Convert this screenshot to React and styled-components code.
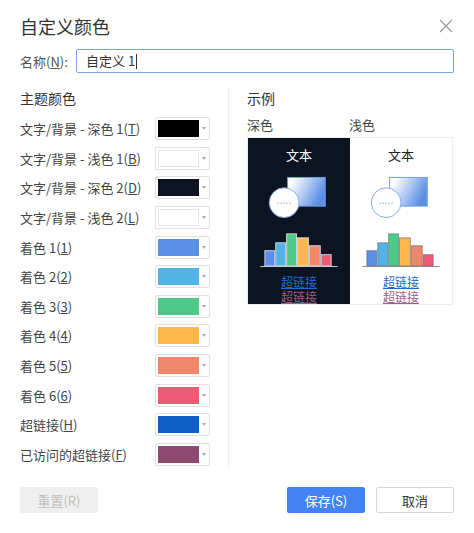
import React from "react";
import styled, { createGlobalStyle } from "styled-components";

const GlobalStyle = createGlobalStyle`
  html, body {
    margin: 0;
    padding: 0;
    background: #ffffff;
  }
  body {
    font-family: "Noto Sans CJK SC", "Noto Sans", "Liberation Sans", sans-serif;
    color: #333;
  }
`;

const Dialog = styled.div`
  width: 474px;
  height: 533px;
  box-sizing: border-box;
  padding: 14px 20px 0 20px;
  display: flex;
  flex-direction: column;
`;

const Header = styled.div`
  display: flex;
  align-items: center;
  justify-content: space-between;
  height: 24px;
`;

const Title = styled.div`
  font-size: 18px;
  line-height: 24px;
  color: #333;
`;

const Close = styled.div`
  width: 14px;
  height: 14px;
  margin-right: 1px;
  display: flex;
`;

const NameRow = styled.div`
  display: flex;
  align-items: center;
  margin-top: 11px;
  height: 24px;
`;

const Label = styled.span`
  font-size: 13px;
  color: #555;
  width: 56px;
  flex-shrink: 0;
`;

const Input = styled.div`
  flex: 1;
  height: 24px;
  box-sizing: border-box;
  border: 1px solid #7ea3e2;
  border-radius: 2px;
  padding-left: 9px;
  font-size: 13px;
  line-height: 22px;
  color: #333;
  display: flex;
  align-items: center;
`;

const Caret = styled.span`
  display: inline-block;
  width: 1px;
  height: 15px;
  background: #333;
  margin-left: 1px;
`;

const Main = styled.div`
  display: flex;
  margin-top: 15px;
  height: 380px;
`;

const LeftCol = styled.div`
  width: 209px;
  border-right: 1px solid #ececec;
  box-sizing: border-box;
  padding-right: 18px;
`;

const RightCol = styled.div`
  flex: 1;
  padding-left: 18px;
`;

const SectionTitle = styled.div`
  font-size: 14px;
  line-height: 20px;
  color: #333;
  margin-bottom: 6px;
`;

const ColorRow = styled.div`
  display: flex;
  align-items: center;
  justify-content: space-between;
  height: 29.6px;
`;

const RowLabel = styled.span`
  font-size: 13px;
  color: #444;
  white-space: nowrap;
`;

const Swatch = styled.div`
  width: 55px;
  height: 23px;
  box-sizing: border-box;
  border: 1px solid #e0e0e0;
  border-radius: 2px;
  display: flex;
  align-items: center;
  padding: 0 0 0 2px;
`;

const SwatchColor = styled.div`
  width: 41px;
  height: 17px;
  box-sizing: border-box;
  background: ${(p) => p.color};
  border: 1px solid ${(p) => (p.color === "#ffffff" ? "#e4e4e4" : p.color)};
`;

const Arrow = styled.div`
  flex: 1;
  display: flex;
  justify-content: center;
  &::after {
    content: "";
    border-left: 2.5px solid transparent;
    border-right: 2.5px solid transparent;
    border-top: 3px solid #aaa;
  }
`;

const ModeLabels = styled.div`
  display: flex;
  font-size: 13px;
  line-height: 18px;
  color: #444;
  margin-top: 8px;
  & > span {
    width: 102px;
  }
`;

const Preview = styled.div`
  display: flex;
  margin-top: 3px;
  width: 206px;
  height: 168px;
  border: 1px solid #ececec;
  box-sizing: border-box;
`;

const Panel = styled.div`
  width: 102px;
  flex-shrink: 0;
  background: ${(p) => (p.dark ? "#0d1421" : "#ffffff")};
  display: flex;
  flex-direction: column;
  align-items: center;
`;

const PanelText = styled.div`
  font-size: 13px;
  line-height: 18px;
  margin-top: 8px;
  color: ${(p) => (p.dark ? "#ffffff" : "#222")};
`;

const LinkStack = styled.div`
  margin-top: 5px;
  display: flex;
  flex-direction: column;
  align-items: center;
`;

const Link = styled.div`
  font-size: 12px;
  line-height: 15px;
  height: 15px;
  text-decoration: underline;
  color: ${(p) => p.color};
`;

const Footer = styled.div`
  display: flex;
  align-items: center;
  margin-top: 19px;
`;

const Button = styled.div`
  width: 78px;
  height: 26px;
  box-sizing: border-box;
  border-radius: 2px;
  font-size: 13px;
  display: flex;
  align-items: center;
  justify-content: center;
  background: ${(p) =>
    p.variant === "primary" ? "#4384f2" : p.variant === "disabled" ? "#efefef" : "#fff"};
  color: ${(p) =>
    p.variant === "primary" ? "#fff" : p.variant === "disabled" ? "#c0c0c0" : "#333"};
  border: 1px solid
    ${(p) => (p.variant === "secondary" ? "#d6d6d6" : "transparent")};
  margin-left: ${(p) => p.ml || 0}px;
`;

const Spacer = styled.div`
  flex: 1;
`;

const rows = [
  ["文字/背景 - 深色 1(", "T", ")", "#000000"],
  ["文字/背景 - 浅色 1(", "B", ")", "#ffffff"],
  ["文字/背景 - 深色 2(", "D", ")", "#0d1421"],
  ["文字/背景 - 浅色 2(", "L", ")", "#ffffff"],
  ["着色 1(", "1", ")", "#5b8fe6"],
  ["着色 2(", "2", ")", "#52b3e6"],
  ["着色 3(", "3", ")", "#4fc98a"],
  ["着色 4(", "4", ")", "#ffb74d"],
  ["着色 5(", "5", ")", "#f0866a"],
  ["着色 6(", "6", ")", "#ee5a74"],
  ["超链接(", "H", ")", "#0e5fc4"],
  ["已访问的超链接(", "F", ")", "#8e4a6e"],
];

const accents = ["#5b8fe6", "#52b3e6", "#4fc98a", "#ffb74d", "#f0866a", "#ee5a74"];
const bars = [
  [16, 11, 81],
  [27, 11, 73],
  [38, 11, 64],
  [49, 12, 68],
  [61, 12, 76],
  [73, 11, 85],
];

const Chart = ({ dark }) => {
  const id = dark ? "gd" : "gl";
  return (
    <svg width="102" height="100" viewBox="0 0 102 100" style={{ marginTop: 6 }}>
      <defs>
        <linearGradient id={id} x1="0" y1="0" x2="1" y2="0.4">
          <stop offset="0.15" stopColor="#ffffff" />
          <stop offset="1" stopColor="#5b8fe6" />
        </linearGradient>
      </defs>
      <rect x="39.5" y="7.5" width="38" height="29" fill={`url(#${id})`} stroke="#6f9be6" strokeWidth="1" />
      <circle cx="36" cy="33" r="15" fill="#ffffff" stroke="#86a9e6" strokeWidth="1" />
      {[30, 33, 36, 39, 42].map((x) => (
        <circle key={x} cx={x} cy="33.5" r="0.9" fill="#b3c8ee" />
      ))}
      {bars.map(([x, w, y], i) => (
        <rect
          key={i}
          x={x + 0.5}
          y={y + 0.5}
          width={w - 1}
          height={97 - y - 0.5}
          fill={accents[i]}
          stroke={dark ? "#e8eef8" : "#5a5a66"}
          strokeOpacity={dark ? 0.8 : 0.55}
          strokeWidth="1"
        />
      ))}
      <line x1="12" y1="97.5" x2="90" y2="97.5" stroke={dark ? "#c8ccd4" : "#888"} strokeWidth="1" />
    </svg>
  );
};

const PreviewPanel = ({ dark }) => (
  <Panel dark={dark}>
    <PanelText dark={dark}>文本</PanelText>
    <Chart dark={dark} />
    <LinkStack>
      <Link color="#1f6bd0">超链接</Link>
      <Link color="#a05c86">超链接</Link>
    </LinkStack>
  </Panel>
);

export default function App() {
  return (
    <>
      <GlobalStyle />
      <Dialog>
        <Header>
          <Title>自定义颜色</Title>
          <Close>
            <svg width="14" height="14" viewBox="0 0 14 14">
              <path d="M1 1L13 13M13 1L1 13" stroke="#999" strokeWidth="1.2" fill="none" />
            </svg>
          </Close>
        </Header>
        <NameRow>
          <Label>
            名称(<u>N</u>):
          </Label>
          <Input>
            自定义 1<Caret />
          </Input>
        </NameRow>
        <Main>
          <LeftCol>
            <SectionTitle>主题颜色</SectionTitle>
            {rows.map(([a, k, b, c]) => (
              <ColorRow key={a + k}>
                <RowLabel>
                  {a}
                  <u>{k}</u>
                  {b}
                </RowLabel>
                <Swatch>
                  <SwatchColor color={c} />
                  <Arrow />
                </Swatch>
              </ColorRow>
            ))}
          </LeftCol>
          <RightCol>
            <SectionTitle>示例</SectionTitle>
            <ModeLabels>
              <span>深色</span>
              <span>浅色</span>
            </ModeLabels>
            <Preview>
              <PreviewPanel dark />
              <PreviewPanel />
            </Preview>
          </RightCol>
        </Main>
        <Footer>
          <Button variant="disabled">重置(R)</Button>
          <Spacer />
          <Button variant="primary">保存(S)</Button>
          <Button variant="secondary" ml={11}>
            取消
          </Button>
        </Footer>
      </Dialog>
    </>
  );
}
